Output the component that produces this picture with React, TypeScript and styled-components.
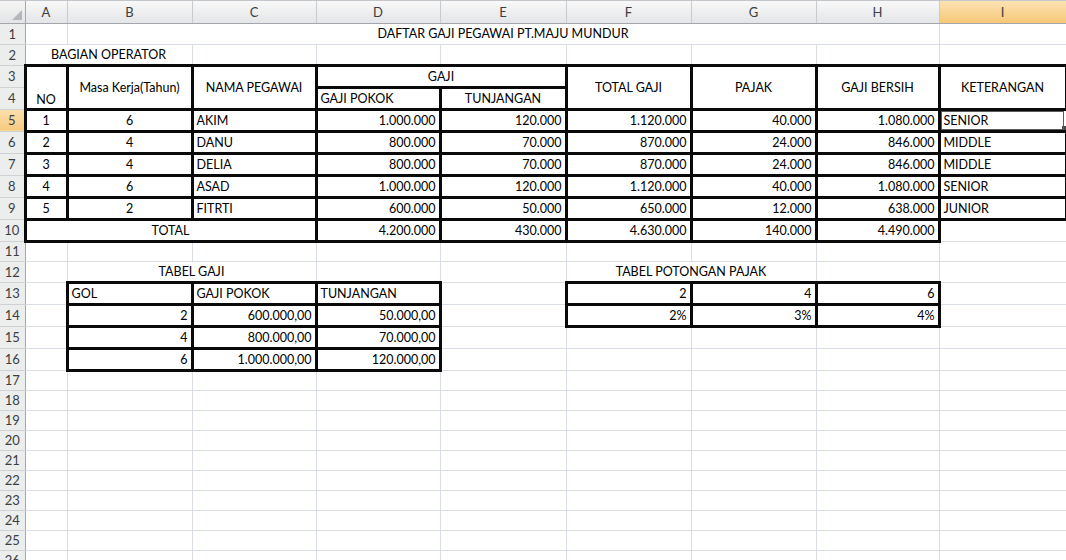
import React from 'react';
import styled, { createGlobalStyle, css } from 'styled-components';

const COLS = [25, 42, 125, 124, 124, 126, 125, 125, 123, 127];
const LETTERS = ['A', 'B', 'C', 'D', 'E', 'F', 'G', 'H', 'I'];

const THICK = '3px solid #0a0a0a';
const GRID = '1px solid #d9dde5';

const GlobalStyle = createGlobalStyle`
  html, body { margin: 0; padding: 0; background: #ffffff; overflow: hidden; }
  #root { width: 1066px; height: 560px; overflow: hidden; }
`;

const Sheet = styled.div`
  width: 1066px;
  height: 559px;
  overflow: hidden;
  border-top: 1px solid #c3c6cb;
`;

const Grid = styled.table`
  border-collapse: collapse;
  table-layout: fixed;
  width: 1066px;
  font-family: Lato, 'Liberation Sans', sans-serif;
  font-size: 12.5px;
  color: #000000;
`;

const ColHead = styled.th<{ $sel?: boolean }>`
  padding: 0;
  font-weight: normal;
  font-size: 13px;
  color: #3a3d42;
  text-align: center;
  border-right: 1px solid #c8cacd;
  border-bottom: 1px solid #a3a7ad;
  background: ${(p) =>
    p.$sel ? 'linear-gradient(#fbe2b3, #f5c877)' : 'linear-gradient(#f8f8f8, #e4e5e7)'};
`;

const Corner = styled.th`
  padding: 0;
  position: relative;
  border-right: 1px solid #a3a7ad;
  border-bottom: 1px solid #a3a7ad;
  background: linear-gradient(#f5f5f5, #e3e4e6);
`;

const CornerMark = styled.svg`
  position: absolute;
  right: 3px;
  bottom: 3px;
`;

const RowHead = styled.th<{ $sel?: boolean }>`
  padding: 0;
  font-weight: normal;
  font-size: 13px;
  color: #3a3d42;
  text-align: center;
  border-right: 1px solid #a3a7ad;
  border-bottom: 1px solid #cfd1d4;
  background: ${(p) => (p.$sel ? 'linear-gradient(#fbe0ab, #f6ca80)' : '#eceded')};
`;

const Row = styled.tr<{ $h: number }>`
  height: ${(p) => p.$h}px;
`;

type Align = 'left' | 'center' | 'right';

interface CellProps {
  $al?: Align;
  $va?: 'top' | 'middle' | 'bottom';
  $box?: boolean;
  $thinRight?: boolean;
  $sel?: boolean;
}

const Cell = styled.td<CellProps>`
  padding: 0 3px;
  border: none;
  border-right: ${GRID};
  border-bottom: ${GRID};
  text-align: ${(p) => p.$al ?? 'left'};
  vertical-align: ${(p) => p.$va ?? 'middle'};
  white-space: nowrap;
  overflow: hidden;
  line-height: 15px;
  ${(p) =>
    p.$box &&
    css`
      border: ${THICK};
    `}
  ${(p) =>
    p.$thinRight &&
    css`
      border-right: 1px solid #6a6a6a;
    `}
  ${(p) =>
    p.$va === 'bottom' &&
    css`
      padding-bottom: 1px;
    `}
  ${(p) =>
    p.$sel &&
    css`
      position: relative;
      &::after {
        content: '';
        position: absolute;
        left: 0;
        top: 0;
        right: 2px;
        bottom: 0;
        border: 1px solid #5a5a5a;
        pointer-events: none;
      }
      &::before {
        content: '';
        position: absolute;
        right: 0;
        bottom: 0;
        width: 4px;
        height: 4px;
        background: #4a4a4a;
        border-left: 1px solid #fff;
        border-top: 1px solid #fff;
      }
    `}
`;

const Blank = () => <Cell />;

const blanks = (n: number, key: string) =>
  Array.from({ length: n }, (_, i) => <Blank key={`${key}-${i}`} />);

const DATA = [
  ['1', '6', 'AKIM', '1.000.000', '120.000', '1.120.000', '40.000', '1.080.000', 'SENIOR'],
  ['2', '4', 'DANU', '800.000', '70.000', '870.000', '24.000', '846.000', 'MIDDLE'],
  ['3', '4', 'DELIA', '800.000', '70.000', '870.000', '24.000', '846.000', 'MIDDLE'],
  ['4', '6', 'ASAD', '1.000.000', '120.000', '1.120.000', '40.000', '1.080.000', 'SENIOR'],
  ['5', '2', 'FITRTI', '600.000', '50.000', '650.000', '12.000', '638.000', 'JUNIOR'],
];

const GAJI_TABLE = [
  ['2', '600.000,00', '50.000,00'],
  ['4', '800.000,00', '70.000,00'],
  ['6', '1.000.000,00', '120.000,00'],
];

const PAJAK = [
  ['2', '4', '6'],
  ['2%', '3%', '4%'],
];

export default function App() {
  return (
    <>
      <GlobalStyle />
      <Sheet>
        <Grid>
          <colgroup>
            {COLS.map((w, i) => (
              <col key={i} style={{ width: w }} />
            ))}
          </colgroup>
          <tbody>
            <Row $h={22}>
              <Corner>
                <CornerMark width="10" height="10" viewBox="0 0 10 10">
                  <polygon points="10,0 10,10 0,10" fill="#b4b7bb" />
                </CornerMark>
              </Corner>
              {LETTERS.map((l) => (
                <ColHead key={l} $sel={l === 'I'}>
                  {l}
                </ColHead>
              ))}
            </Row>

            <Row $h={21}>
              <RowHead>1</RowHead>
              <Blank />
              <Cell colSpan={7} $al="center">
                DAFTAR GAJI PEGAWAI PT.MAJU MUNDUR
              </Cell>
              <Blank />
            </Row>

            <Row $h={21}>
              <RowHead>2</RowHead>
              <Cell colSpan={2} $al="center">
                BAGIAN OPERATOR
              </Cell>
              {blanks(7, 'r2')}
            </Row>

            <Row $h={22}>
              <RowHead>3</RowHead>
              <Cell rowSpan={2} $box $al="center" $va="bottom">
                NO
              </Cell>
              <Cell rowSpan={2} $box $al="center">
                Masa Kerja(Tahun)
              </Cell>
              <Cell rowSpan={2} $box $al="center">
                NAMA PEGAWAI
              </Cell>
              <Cell colSpan={2} $box $al="center">
                GAJI
              </Cell>
              <Cell rowSpan={2} $box $al="center">
                TOTAL GAJI
              </Cell>
              <Cell rowSpan={2} $box $al="center">
                PAJAK
              </Cell>
              <Cell rowSpan={2} $box $al="center">
                GAJI BERSIH
              </Cell>
              <Cell rowSpan={2} $box $al="center">
                KETERANGAN
              </Cell>
            </Row>

            <Row $h={22}>
              <RowHead>4</RowHead>
              <Cell $box>GAJI POKOK</Cell>
              <Cell $box $al="center">
                TUNJANGAN
              </Cell>
            </Row>

            {DATA.map((r, i) => (
              <Row $h={22} key={r[2] + i}>
                <RowHead $sel={i === 0}>{5 + i}</RowHead>
                <Cell $box $al="center">
                  {r[0]}
                </Cell>
                <Cell $box $al="center">
                  {r[1]}
                </Cell>
                <Cell $box>{r[2]}</Cell>
                {r.slice(3, 8).map((v, j) => (
                  <Cell $box $al="right" key={j}>
                    {v}
                  </Cell>
                ))}
                <Cell $box $sel={i === 0} $thinRight={i === 0}>
                  {r[8]}
                </Cell>
              </Row>
            ))}

            <Row $h={22}>
              <RowHead>10</RowHead>
              <Cell colSpan={3} $box $al="center">
                TOTAL
              </Cell>
              {['4.200.000', '430.000', '4.630.000', '140.000', '4.490.000'].map((v) => (
                <Cell $box $al="right" key={v}>
                  {v}
                </Cell>
              ))}
              <Blank />
            </Row>

            <Row $h={20}>
              <RowHead>11</RowHead>
              {blanks(9, 'r11')}
            </Row>

            <Row $h={21}>
              <RowHead>12</RowHead>
              <Blank />
              <Cell colSpan={2} $al="center">
                TABEL GAJI
              </Cell>
              <Blank />
              <Blank />
              <Cell colSpan={2} $al="center">
                TABEL POTONGAN PAJAK
              </Cell>
              <Blank />
              <Blank />
            </Row>

            <Row $h={22}>
              <RowHead>13</RowHead>
              <Blank />
              <Cell $box>GOL</Cell>
              <Cell $box>GAJI POKOK</Cell>
              <Cell $box>TUNJANGAN</Cell>
              <Blank />
              {PAJAK[0].map((v) => (
                <Cell $box $al="right" key={v}>
                  {v}
                </Cell>
              ))}
              <Blank />
            </Row>

            {GAJI_TABLE.map((r, i) => (
              <Row $h={22} key={r[0]}>
                <RowHead>{14 + i}</RowHead>
                <Blank />
                {r.map((v) => (
                  <Cell $box $al="right" key={v}>
                    {v}
                  </Cell>
                ))}
                <Blank />
                {i === 0
                  ? PAJAK[1].map((v) => (
                      <Cell $box $al="right" key={v}>
                        {v}
                      </Cell>
                    ))
                  : blanks(3, `p${i}`)}
                <Blank />
              </Row>
            ))}

            {Array.from({ length: 10 }, (_, i) => (
              <Row $h={20} key={`e${i}`}>
                <RowHead>{17 + i}</RowHead>
                {blanks(9, `e${i}`)}
              </Row>
            ))}
          </tbody>
        </Grid>
      </Sheet>
    </>
  );
}
